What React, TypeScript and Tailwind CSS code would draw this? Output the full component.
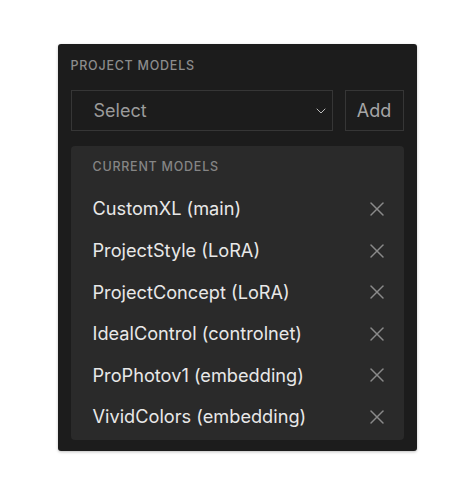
import { ChevronDown, X } from "lucide-react";

const models = [
  "CustomXL (main)",
  "ProjectStyle (LoRA)",
  "ProjectConcept (LoRA)",
  "IdealControl (controlnet)",
  "ProPhotov1 (embedding)",
  "VividColors (embedding)",
];

export default function App() {
  return (
    <div className="flex h-screen w-full items-center justify-center bg-white font-['Inter',sans-serif]">
      <div className="w-[359px] rounded-[3px] bg-[#1c1c1c] px-[13px] pt-[14px] pb-[11px] shadow-[0_1px_3px_rgba(0,0,0,0.25)]">
        <div className="text-[12.5px] leading-4 font-medium tracking-[0.06em] text-[#8c8c8c]">PROJECT MODELS</div>
        <div className="mt-[16px] flex gap-3">
          <div className="flex h-[41px] flex-1 items-center justify-between border border-[#363636] pl-[22px] pr-[3px]">
            <span className="text-[18px] text-[#9b9b9b]">Select</span>
            <ChevronDown size={16} strokeWidth={1.5} className="text-[#bdbdbd]" />
          </div>
          <div className="flex h-[41px] w-[59px] items-center justify-center border border-[#363636] text-[18px] text-[#a6a6a6]">
            Add
          </div>
        </div>
        <div className="mt-[15px] rounded-[4px] bg-[#2a2a2a] pl-[22px] pr-[15px] pt-[13px] pb-[2px]">
          <div className="mb-[13px] text-[12.5px] leading-4 font-medium tracking-[0.06em] text-[#858585]">CURRENT MODELS</div>
          {models.map((m) => (
            <div key={m} className="flex h-[41.6px] items-center justify-between">
              <span className="text-[18.2px] text-[#e8e8e8]">{m}</span>
              <X size={24} strokeWidth={1.5} className="text-[#8a8a8a]" />
            </div>
          ))}
        </div>
      </div>
    </div>
  );
}
